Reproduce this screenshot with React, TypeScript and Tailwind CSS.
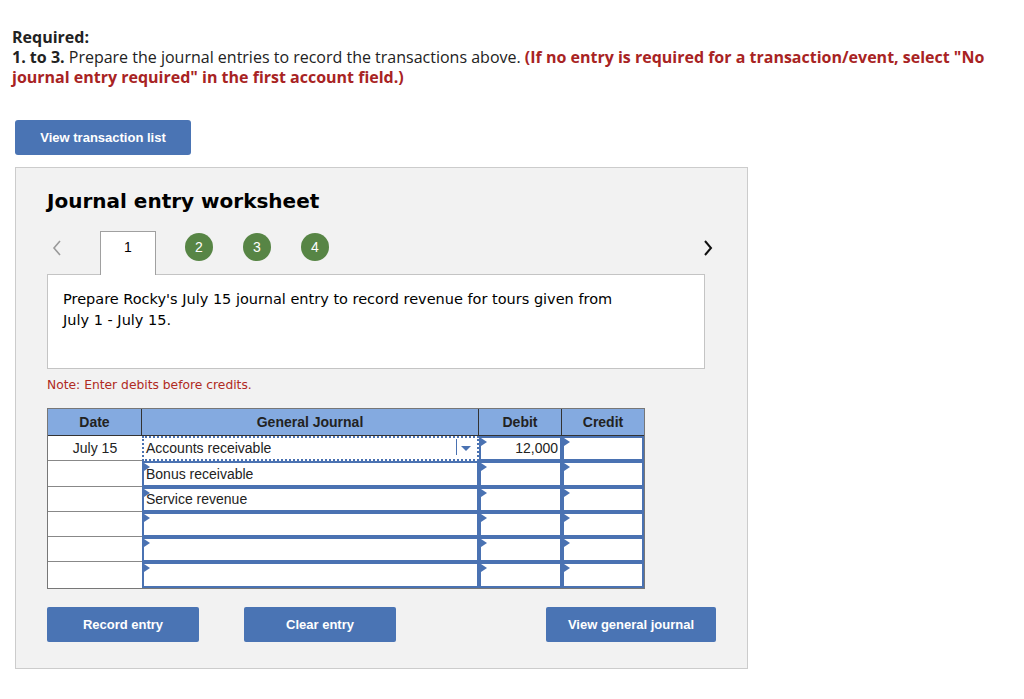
import React from "react";

const Tri = () => (
  <span className="absolute left-0 top-0 h-0 w-0 border-y-[4px] border-l-[6px] border-y-transparent border-l-[#4a72b2]" />
);

function InputCell({ w, text, right }: { w: string; text?: string; right?: boolean }) {
  return (
    <div className={`relative ${w} h-full bg-white border-2 border-[#4a72b2] flex items-center ${right ? "justify-end pr-[2px]" : "pl-[2px]"} text-[14px] text-[#222]`}>
      <Tri />
      {text}
    </div>
  );
}

export default function App() {
  const rows: { date: string; acct: string; debit: string; h: string }[] = [
    { date: "July 15", acct: "Accounts receivable", debit: "12,000", h: "h-[25px]" },
    { date: "", acct: "Bonus receivable", debit: "", h: "h-[26px]" },
    { date: "", acct: "Service revenue", debit: "", h: "h-[25px]" },
    { date: "", acct: "", debit: "", h: "h-[25px]" },
    { date: "", acct: "", debit: "", h: "h-[25px]" },
    { date: "", acct: "", debit: "", h: "h-[26px]" },
  ];
  return (
    <div className="w-[1024px] h-[699px] bg-white overflow-hidden">
      <div className="pt-[27px] pl-[12px] pr-[20px] text-[16px] leading-[20px] text-[#222]" style={{ fontFamily: "'Open Sans', Lato, sans-serif" }}>
        <div className="font-bold">Required:</div>
        <div>
          <span className="font-bold">1. to 3.</span> Prepare the journal entries to record the transactions above.{" "}
          <span className="font-bold text-[#a82323]">
            (If no entry is required for a transaction/event, select "No journal entry required" in the first account field.)
          </span>
        </div>
      </div>

      <div className="pl-[15px] mt-[33px]">
        <button className="w-[176px] h-[35px] rounded-[3px] bg-[#4a74b4] text-white text-[13px] font-bold" style={{ fontFamily: "'Liberation Sans', Arial, sans-serif" }}>
          View transaction list
        </button>
      </div>

      <div className="ml-[15px] mt-[12px] w-[733px] h-[502px] bg-[#f2f2f2] border border-[#cccccc] pl-[31px] flex flex-col">
        <div className="mt-[21px] text-[20px] leading-[24px] font-bold text-black" style={{ fontFamily: "'DejaVu Sans', Verdana, sans-serif" }}>
          Journal entry worksheet
        </div>

        <div className="mt-[17px] w-[657px] h-[44px] flex items-end relative" style={{ fontFamily: "'Liberation Sans', Arial, sans-serif" }}>
          <div className="absolute left-[4px] top-[8px]">
            <svg width="12" height="20" viewBox="0 0 12 20"><path d="M9 3 L3 10 L9 17" fill="none" stroke="#9a9a9a" strokeWidth="1.6" /></svg>
          </div>
          <div className="ml-[53px] w-[56px] h-[44px] bg-white border border-b-0 border-[#a0a0a0] flex justify-center pt-[5px] text-[14px] text-black relative z-10 -mb-[1px]">
            1
          </div>
          <div className="flex gap-[30px] ml-[29px] self-start mt-[3px]">
            {["2", "3", "4"].map((n) => (
              <div key={n} className="w-[28px] h-[28px] rounded-full bg-[#578545] text-white text-[14px] flex items-center justify-center">
                {n}
              </div>
            ))}
          </div>
          <div className="absolute right-[-10px] top-[8px]">
            <svg width="12" height="20" viewBox="0 0 12 20"><path d="M3 3 L9 10 L3 17" fill="none" stroke="#111" strokeWidth="2" /></svg>
          </div>
        </div>

        <div className="w-[658px] h-[95px] bg-white border border-[#c4c4c4] pl-[15px] pt-[14px] text-[14.5px] leading-[21px] text-black" style={{ fontFamily: "'DejaVu Sans', Verdana, sans-serif" }}>
          Prepare Rocky's July 15 journal entry to record revenue for tours given from
          <br />
          July 1 - July 15.
        </div>

        <div className="mt-[8px] text-[12.3px] leading-[16px] text-[#b02a22]" style={{ fontFamily: "'DejaVu Sans', Verdana, sans-serif" }}>
          Note: Enter debits before credits.
        </div>

        <div className="mt-[15px] w-[598px] border border-[#777] bg-white" style={{ fontFamily: "'Liberation Sans', Arial, sans-serif" }}>
          <div className="flex h-[27px] bg-[#84aae0] text-[14px] font-bold text-[#222] border-b border-[#333]">
            <div className="w-[94px] flex items-center justify-center border-r border-[#333]">Date</div>
            <div className="w-[337px] flex items-center justify-center border-r border-[#333]">General Journal</div>
            <div className="w-[83px] flex items-center justify-center border-r border-[#333]">Debit</div>
            <div className="flex-1 flex items-center justify-center">Credit</div>
          </div>
          {rows.map((r, i) => (
            <div key={i} className={`flex ${r.h}`}>
              <div className={`w-[94px] h-full flex items-center justify-center text-[14px] text-[#222] ${i < rows.length - 1 ? "border-b border-[#888]" : ""}`}>
                {r.date}
              </div>
              {i === 0 ? (
                <div className="relative w-[337px] h-full bg-white border-2 border-dotted border-[#4a72b2] flex items-center pl-[2px] text-[14px] text-[#222]">
                  {r.acct}
                  <div className="absolute right-[20px] top-[1px] bottom-[4px] w-[1px] bg-[#4a72b2]" />
                  <div className="absolute right-[6px] top-[8px] h-0 w-0 border-x-[5px] border-t-[5px] border-x-transparent border-t-[#4a72b2]" />
                </div>
              ) : (
                <InputCell w="w-[337px]" text={r.acct} />
              )}
              <InputCell w="w-[83px]" text={r.debit} right />
              <InputCell w="flex-1" />
            </div>
          ))}
        </div>

        <div className="mt-[18px] flex text-white text-[13px] font-bold" style={{ fontFamily: "'Liberation Sans', Arial, sans-serif" }}>
          <button className="w-[152px] h-[35px] rounded-[2px] bg-[#4a74b4]">Record entry</button>
          <button className="ml-[45px] w-[152px] h-[35px] rounded-[2px] bg-[#4a74b4]">Clear entry</button>
          <button className="ml-[150px] w-[170px] h-[35px] rounded-[2px] bg-[#4a74b4]">View general journal</button>
        </div>
      </div>
    </div>
  );
}
